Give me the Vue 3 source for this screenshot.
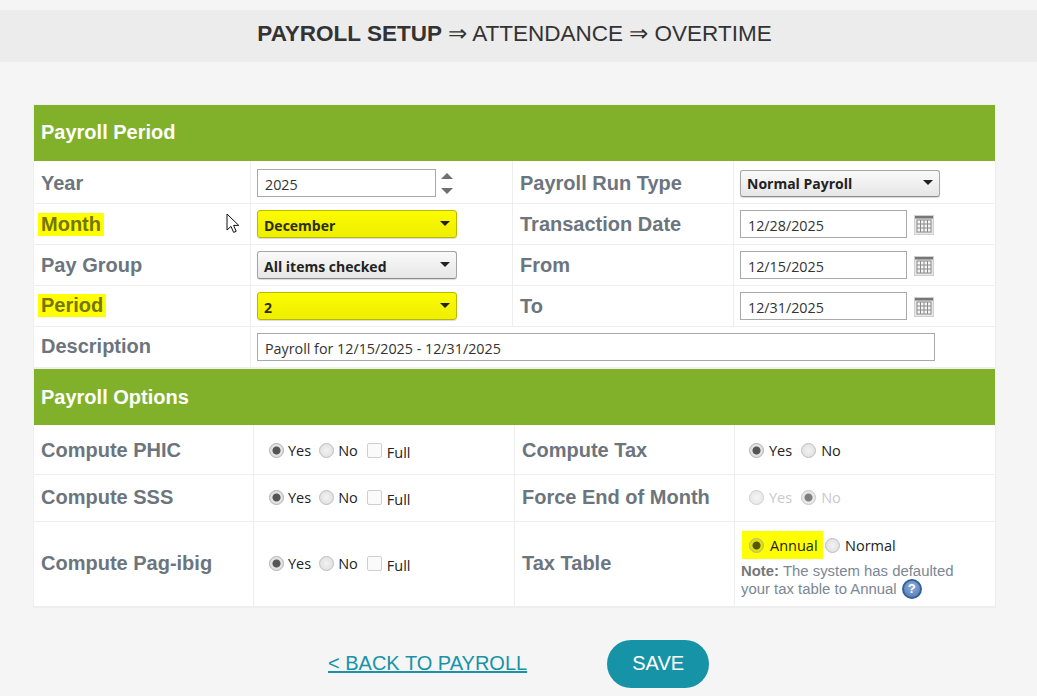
<script setup>
const periodRows = [
  { label: 'Year', mark: false, kind: 'year', right: 'Payroll Run Type', rightKind: 'run', cls: 'first' },
  { label: 'Month', mark: true, kind: 'select', value: 'December', hot: true, right: 'Transaction Date', date: '12/28/2025' },
  { label: 'Pay Group', mark: false, kind: 'select', value: 'All items checked', hot: false, right: 'From', date: '12/15/2025' },
  { label: 'Period', mark: true, kind: 'select', value: '2', hot: true, right: 'To', date: '12/31/2025', labelCls: 'lift' },
]
const optionRows = [
  { label: 'Compute PHIC', right: 'Compute Tax', cls: 'r1', kind: 'tax' },
  { label: 'Compute SSS', right: 'Force End of Month', cls: 'r2', kind: 'force' },
  { label: 'Compute Pag-ibig', right: 'Tax Table', cls: 'r3', kind: 'table' },
]
</script>

<template>
  <div class="page">
    <h1 class="title"><b>PAYROLL SETUP</b> ⇒ ATTENDANCE ⇒ OVERTIME</h1>

    <div class="panel">
      <div class="band">Payroll Period</div>
      <div class="grid period">
        <template v-for="row in periodRows" :key="row.label">
          <div class="cell label plabel" :class="[row.cls, row.labelCls]"><span :class="{ mark: row.mark }">{{ row.label }}</span></div>
          <div class="cell field" :class="row.cls">
            <template v-if="row.kind === 'year'">
              <div class="input year">2025</div>
              <div class="spin"><i class="up"></i><i class="down"></i></div>
            </template>
            <div v-else class="select" :class="{ hot: row.hot }">
              <span>{{ row.value }}</span><i class="caret"></i>
            </div>
          </div>
          <div class="cell label plabel right" :class="row.cls">{{ row.right }}</div>
          <div class="cell field rightfield" :class="row.cls">
            <div v-if="row.rightKind === 'run'" class="select short">
              <span>Normal Payroll</span><i class="caret"></i>
            </div>
            <template v-else>
              <div class="input date">{{ row.date }}</div>
              <svg class="cal" width="20" height="20" viewBox="0 0 20 20">
                <rect x="0.5" y="0.5" width="19" height="19" fill="#e6e6e6" stroke="#d0d0d0" />
                <rect x="1" y="1" width="18" height="2.5" fill="#777" />
                <rect x="3" y="5" width="14" height="12" fill="#f4f4f4" stroke="#8a8a8a" />
                <path d="M6.5 5v12M10 5v12M13.5 5v12M3 9h14M3 13h14" stroke="#8a8a8a" fill="none" />
              </svg>
            </template>
          </div>
        </template>
        <div class="cell label last">Description</div>
        <div class="cell field last wide">
          <div class="input desc">Payroll for 12/15/2025 - 12/31/2025</div>
        </div>
      </div>

      <div class="band second">Payroll Options</div>
      <div class="grid options">
        <template v-for="row in optionRows" :key="row.label">
          <div class="cell label" :class="row.cls">{{ row.label }}</div>
          <div class="cell field choices" :class="row.cls">
            <span class="radio on"></span><span class="opt">Yes</span>
            <span class="radio"></span><span class="opt">No</span>
            <span class="check"></span><span class="opt full">Full</span>
          </div>
          <div class="cell label right2" :class="row.cls">{{ row.right }}</div>
          <div class="cell field choices c4" :class="row.cls">
            <template v-if="row.kind === 'tax'">
              <span class="radio on"></span><span class="opt">Yes</span>
              <span class="radio"></span><span class="opt">No</span>
            </template>
            <template v-else-if="row.kind === 'force'">
              <span class="radio off"></span><span class="opt faded">Yes</span>
              <span class="radio on off"></span><span class="opt faded">No</span>
            </template>
            <div v-else class="taxtable">
              <div class="taxline">
                <span class="hl"><span class="radio on"></span><span class="opt">Annual</span></span>
                <span class="radio"></span><span class="opt">Normal</span>
              </div>
              <p class="note">
                <b>Note:</b> The system has defaulted<br />your tax table to Annual
                <span class="help">?</span>
              </p>
            </div>
          </div>
        </template>
      </div>
    </div>

    <div class="actions">
      <a class="back" href="#">&lt; BACK TO PAYROLL</a>
      <button class="save" type="button">SAVE</button>
    </div>

    <svg class="cursor" width="14" height="21" viewBox="0 0 14 21">
      <path d="M1 1v16l4-3.6 2.6 6 2.6-1.1-2.6-5.9h5.2z" fill="#fff" stroke="#111" stroke-width="1" />
    </svg>
  </div>
</template>

<style>
html, body { margin: 0; background: #f5f5f5; }
</style>

<style scoped>
.page {
  position: relative;
  width: 1037px;
  height: 696px;
  overflow: hidden;
  padding-top: 10px;
  box-sizing: border-box;
  background: #f5f5f5;
  font-family: "Liberation Sans", Arial, sans-serif;
}
.title {
  margin: 0;
  height: 52px;
  line-height: 48px;
  background: #ececec;
  text-align: center;
  font-size: 22.5px;
  font-weight: 400;
  color: #333;
  padding-right: 8px;
}
.title b { font-weight: 700; }
.panel {
  width: 961px;
  margin: 43px 0 0 34px;
  background: #fff;
  outline: 1px solid #eee;
}
.band {
  height: 56px;
  line-height: 54px;
  padding-left: 7px;
  background: #81b12a;
  color: #fff;
  font-size: 20px;
  font-weight: 700;
}
.band.second { line-height: 56px; }
.grid { display: grid; }
.period {
  grid-template-columns: 217px 262px 221px 261px;
  grid-template-rows: 43px 41px 41px 41px 42px;
}
.options {
  grid-template-columns: 220px 261px 220px 260px;
  grid-template-rows: 50px 47px 85px;
}
.cell {
  display: flex;
  align-items: center;
  box-sizing: border-box;
  border-bottom: 1px solid #eee;
  border-right: 1px solid #eee;
  padding-left: 7px;
  min-width: 0;
}
.cell:nth-child(4n) { border-right: none; }
.cell.first { padding-top: 2px; }
.label {
  color: #6c757d;
  font-size: 20px;
  font-weight: 700;
  padding-bottom: 2px;
}
.plabel { padding-bottom: 0; }
.plabel.lift { padding-bottom: 2px; }
.label.r1 { padding-top: 4px; }
.choices.r1 { padding-top: 3px; }
.right { padding-left: 7px; }
.right2 { padding-left: 7px; }
.mark {
  background: #ffff00;
  color: #757500;
  margin-left: -3px;
  padding: 0 3px;
  line-height: 23px;
}
.field { padding-left: 6px; }
.rightfield { padding-left: 6px; }
.cell.last { border-right: 1px solid #eee; border-bottom: 2px solid #eee; }
.wide { grid-column: 2 / 5; border-right: none !important; }
.input {
  box-sizing: border-box;
  height: 28px;
  line-height: 28px;
  padding: 1px 0 0 7px;
  background: #fff;
  border: 1px solid #a9a9a9;
  color: #333;
  font-family: "Open Sans", sans-serif;
  font-size: 14.3px;
}
.year { width: 179px; }
.date { width: 167px; }
.desc { width: 678px; }
.cal { flex: none; margin: 2px 0 0 7px; }
.spin {
  display: flex;
  flex-direction: column;
  gap: 9px;
  margin-left: 5px;
}
.spin i { display: block; width: 0; height: 0; border-left: 6px solid transparent; border-right: 6px solid transparent; }
.spin .up { border-bottom: 6px solid #6f6f6f; }
.spin .down { border-top: 6px solid #6f6f6f; }
.select {
  box-sizing: border-box;
  width: 200px;
  height: 28px;
  display: flex;
  align-items: center;
  justify-content: space-between;
  padding: 2px 6px 0 6px;
  border: 1px solid #a5a5a5;
  border-bottom-color: #8b8b8b;
  border-radius: 3px;
  background: linear-gradient(#fafafa, #e6e6e6);
  box-shadow: 0 1px 1px rgba(0, 0, 0, 0.15);
  color: #222;
  font-family: "Open Sans", sans-serif;
  font-size: 14px;
  font-weight: 700;
}
.select.short { height: 27px; padding-top: 1px; }
.select.hot {
  background: linear-gradient(#fbfb00, #eeee00);
  border-color: #b9b900;
  color: #2d2d00;
}
.caret {
  width: 0;
  height: 0;
  margin-bottom: 3px;
  border-left: 5px solid transparent;
  border-right: 5px solid transparent;
  border-top: 5px solid #222;
}
.choices {
  padding-left: 15px;
  font-family: "Open Sans", sans-serif;
  font-size: 14.5px;
  color: #222;
  padding-bottom: 2px;
}
.c4 { padding-left: 14px; }
.r3.choices:not(.c4) { padding-bottom: 1px; }
.radio {
  box-sizing: border-box;
  display: inline-block;
  flex: none;
  width: 15px;
  height: 15px;
  border-radius: 50%;
  border: 1px solid #bdbdbd;
  background: radial-gradient(circle, #f2f2f2, #dcdcdc);
}
.radio.on {
  background: radial-gradient(circle, #555 0 3.5px, #e2e2e2 4.5px);
  border-color: #b0b0b0;
}
.radio.off { opacity: 0.75; }
.opt { margin: 1px 8px 0 4px; line-height: 18px; }
.c4 .opt { margin-left: 5px; margin-right: 9px; }
.check {
  box-sizing: border-box;
  flex: none;
  width: 15px;
  height: 15px;
  margin-left: 1px;
  border: 1px solid #cfcfcf;
  border-radius: 2px;
  background: #fafafa;
}
.full { margin: 5px 0 0 5px; }
.faded { color: #c9c9c9; }
.taxtable {
  display: flex;
  flex-direction: column;
  align-self: flex-start;
  margin: 9px 0 0 -7px;
}
.taxline { display: flex; align-items: center; }
.hl {
  display: flex;
  align-items: center;
  height: 28px;
  width: 81px;
  padding-left: 7px;
  box-sizing: border-box;
  background: #ffff00;
  margin-right: 2px;
}
.hl .radio.on { background: radial-gradient(circle, #555500 0 3.5px, #e2e200 4.5px); }
.c4 .hl .opt { margin-right: 0; margin-left: 6px; }
.note {
  margin: 3px 0 0 -1px;
  font-family: "Liberation Sans", Arial, sans-serif;
  font-size: 14.9px;
  line-height: 18px;
  color: #7b8794;
}
.note b { color: #777; }
.help {
  display: inline-block;
  box-sizing: border-box;
  width: 20px;
  height: 20px;
  margin: -5px 0 -5px 1px;
  line-height: 16px;
  border-radius: 50%;
  text-align: center;
  vertical-align: 1px;
  border: 2px solid #34609c;
  background: radial-gradient(circle at 50% 35%, #8fadd6, #4f78b2);
  color: #fff;
  font-weight: 700;
  font-size: 13px;
}
.actions {
  display: flex;
  align-items: center;
  margin: 33px 0 0 328px;
  gap: 80px;
}
.back {
  color: #1793a8;
  font-size: 20px;
  text-decoration: underline;
  margin-bottom: 1px;
}
.save {
  width: 102px;
  height: 48px;
  border: none;
  border-radius: 24px;
  background: #1793a8;
  color: #fff;
  font-family: "Liberation Sans", Arial, sans-serif;
  font-size: 20px;
  padding-bottom: 3px;
}
.cursor { position: absolute; left: 226px; top: 213px; }
</style>
